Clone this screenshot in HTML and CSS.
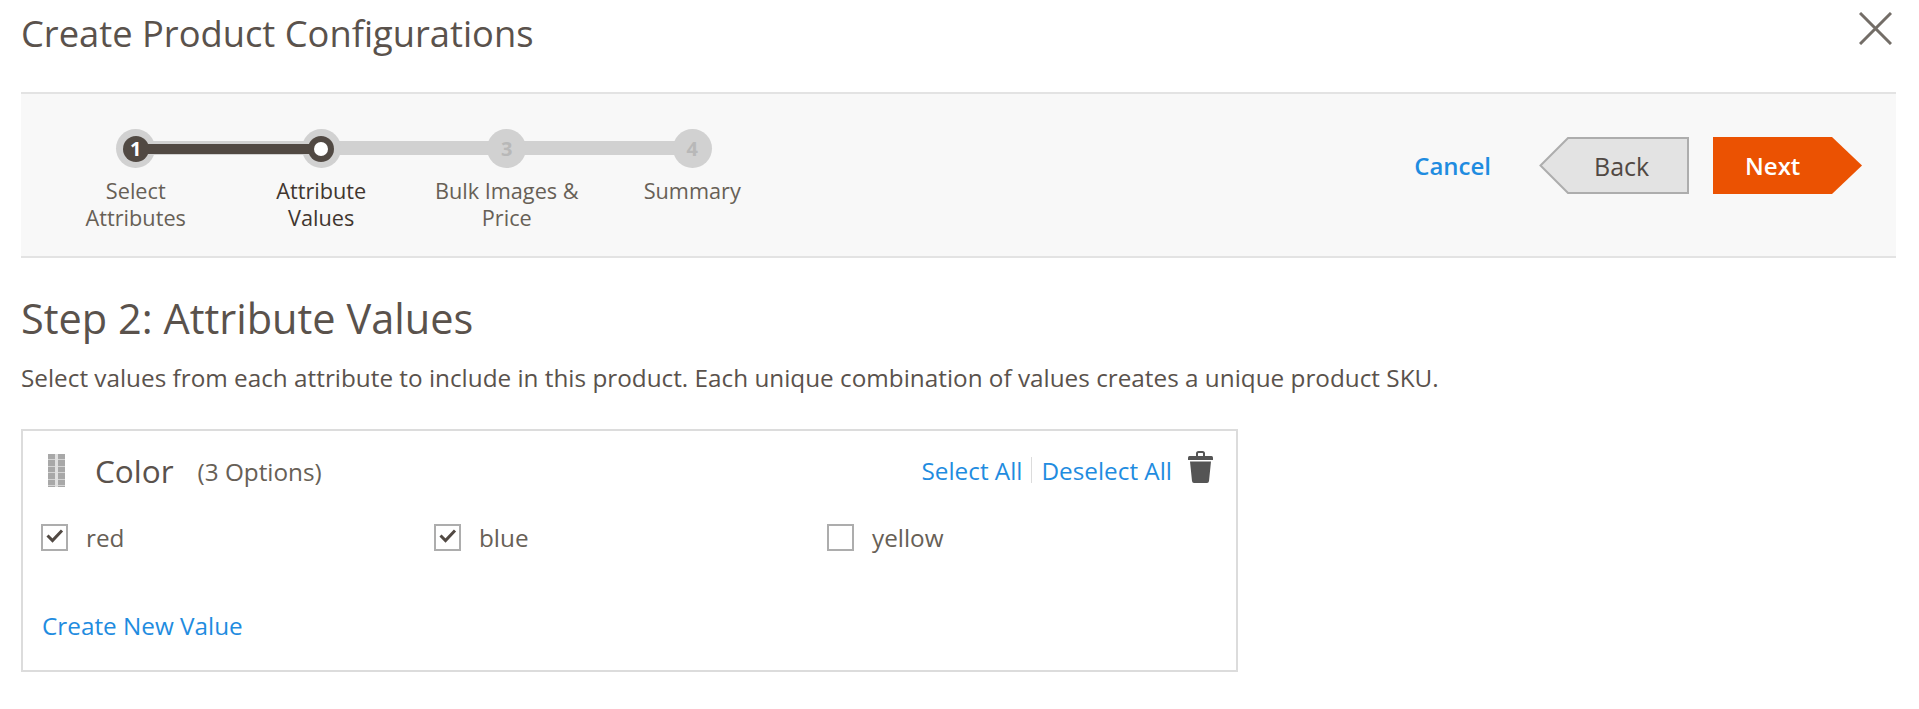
FILE: index.html
```html
<!doctype html>
<html lang="en">
<head>
    <meta charset="UTF-8">
    <title>Create Product Configurations</title>
    <link rel="stylesheet" href="styles.css">
</head>
<body>
<header class="modal_header">
    <h1 class="modal_title">Create Product Configurations</h1>
    <button class="modal_close" aria-label="Close">
        <svg width="33" height="33" viewBox="0 0 33 33"><path d="M1 1 32 32M32 1 1 32" fill="none" stroke="#736d67" stroke-width="3"/></svg>
    </button>
</header>

<section class="wizard">
    <ol class="steps">
        <li class="step step_done">
            <span class="step_dot"><span class="step_num">1</span></span>
            <span class="step_label">Select Attributes</span>
        </li>
        <li class="step step_active">
            <span class="step_dot"><span class="step_num"></span></span>
            <span class="step_label">Attribute Values</span>
        </li>
        <li class="step">
            <span class="step_dot"><span class="step_num">3</span></span>
            <span class="step_label">Bulk Images &amp; Price</span>
        </li>
        <li class="step">
            <span class="step_dot"><span class="step_num">4</span></span>
            <span class="step_label">Summary</span>
        </li>
    </ol>
    <div class="actions">
        <a class="link cancel" href="#">Cancel</a>
        <button class="arrow_btn back">
            <svg width="150" height="57" viewBox="0 0 150 57"><path d="M29 1H149V56H29L1.500 28.500Z" fill="#e3e3e3" stroke="#adadad" stroke-width="2"/></svg>
            <span>Back</span>
        </button>
        <button class="arrow_btn next">
            <svg width="149" height="57" viewBox="0 0 149 57"><path d="M0 0H119L149 28.500 119 57H0Z" fill="#eb5202"/></svg>
            <span>Next</span>
        </button>
    </div>
</section>

<main class="step_body">
    <h2 class="step_title">Step 2: Attribute Values</h2>
    <p class="step_desc">Select values from each attribute to include in this product. Each unique combination of values creates a unique product SKU.</p>

    <div class="attr_box">
        <div class="attr_head">
            <span class="drag"></span>
            <span class="attr_name">Color</span>
            <span class="attr_count">(3 Options)</span>
            <div class="attr_tools">
                <a class="link" href="#">Select All</a>
                <span class="sep"></span>
                <a class="link" href="#">Deselect All</a>
                <svg class="trash" width="25" height="32" viewBox="0 0 25 32">
                    <path d="M9 5V2.500Q9 1 10.500 1H14.500Q16 1 16 2.500V5" fill="none" stroke="#555" stroke-width="2"/>
                    <path d="M1.500 5H23.500Q25 5 25 6.500V9H0V6.500Q0 5 1.500 5Z" fill="#555"/>
                    <path d="M2 10.500H23L21 30Q20.800 32 19 32H6Q4.200 32 4 30Z" fill="#555"/>
                </svg>
            </div>
        </div>
        <div class="options">
            <label class="option">
                <span class="check">
                    <svg width="23" height="23" viewBox="0 0 23 23"><path d="M4.500 9.500 9.500 14.500 19 4.500" fill="none" stroke="#514943" stroke-width="3"/></svg>
                </span>
                red
            </label>
            <label class="option">
                <span class="check">
                    <svg width="23" height="23" viewBox="0 0 23 23"><path d="M4.500 9.500 9.500 14.500 19 4.500" fill="none" stroke="#514943" stroke-width="3"/></svg>
                </span>
                blue
            </label>
            <label class="option">
                <span class="check"></span>
                yellow
            </label>
        </div>
        <a class="link new_value" href="#">Create New Value</a>
    </div>
</main>
</body>
</html>
```

FILE: styles.css
```css
* {
    box-sizing: border-box;
}

body {
    margin: 0;
    padding: 0 23px 0 21px;
    background: #fff;
    color: #514943;
    font-family: "Open Sans", "Noto Sans", sans-serif;
}

h1, h2, p, ol {
    margin: 0;
    padding: 0;
}

button {
    padding: 0;
    border: 0;
    background: none;
    font: inherit;
}

.link {
    color: #1f8ce0;
    text-decoration: none;
}

/* header */
.modal_header {
    display: flex;
    justify-content: space-between;
    align-items: flex-start;
    height: 92px;
}

.modal_title {
    margin-top: 8px;
    font-size: 36.300px;
    line-height: 50px;
    font-weight: 400;
    color: #5a524c;
}

.modal_close {
    display: flex;
    margin-top: 12px;
    margin-right: 4px;
}

/* wizard bar */
.wizard {
    display: flex;
    align-items: flex-start;
    height: 166px;
    padding: 35px 34px 0 22px;
    background: #f8f8f8;
    border-top: 2px solid #e3e3e3;
    border-bottom: 2px solid #e3e3e3;
}

.steps {
    display: flex;
    list-style: none;
}

.step {
    position: relative;
    display: flex;
    flex-direction: column;
    align-items: center;
    width: 185.500px;
}

.step:not(:last-child)::before {
    content: "";
    position: absolute;
    left: 50%;
    top: 12px;
    width: 100%;
    height: 14px;
    background: #d1d1d1;
}

.step_done::after {
    content: "";
    position: absolute;
    left: 50%;
    top: 15px;
    width: 100%;
    height: 10px;
    background: #514943;
    z-index: 2;
}

.step_dot {
    position: relative;
    display: flex;
    justify-content: center;
    align-items: center;
    width: 39px;
    height: 39px;
    border-radius: 50%;
    background: #d1d1d1;
}

.step_num {
    position: relative;
    z-index: 3;
    font-size: 20px;
    font-weight: 700;
    color: #b8b8b8;
}

.step_done .step_num,
.step_active .step_num {
    display: flex;
    justify-content: center;
    align-items: center;
    width: 26px;
    height: 26px;
    border-radius: 50%;
    background: #514943;
    color: #fff;
}

.step_active .step_num::before {
    content: "";
    width: 14px;
    height: 14px;
    border-radius: 50%;
    background: #fff;
}

.step_label {
    width: 150px;
    margin-top: 9px;
    font-size: 21.700px;
    line-height: 27px;
    text-align: center;
    color: #676056;
}

.step_active .step_label {
    color: #41362f;
}

.actions {
    display: flex;
    align-items: center;
    margin-left: auto;
    margin-top: 8px;
    font-size: 24px;
}

.cancel {
    margin-right: 48px;
    font-weight: 600;
}

.arrow_btn {
    position: relative;
    display: flex;
    width: 150px;
    height: 57px;
    align-items: center;
    font-size: 24px;
}

.arrow_btn svg {
    position: absolute;
    left: 0;
    top: 0;
}

.arrow_btn span {
    position: relative;
}

.back {
    color: #514943;
    padding-left: 55px;
    margin-right: 24px;
    font-size: 25px;
}

.next {
    width: 149px;
    color: #fff;
    font-weight: 600;
    padding-left: 32px;
}

/* step content */
.step_title {
    margin-top: 32px;
    font-size: 41.500px;
    line-height: 56px;
    font-weight: 400;
    color: #5a524c;
}

.step_desc {
    margin-top: 17px;
    font-size: 24.300px;
    line-height: 30px;
    color: #5a524c;
}

.attr_box {
    width: 1217px;
    height: 243px;
    margin-top: 36px;
    padding: 20px 23px 0 18px;
    border: 2px solid #dcdcdc;
}

.attr_head {
    display: flex;
    align-items: center;
    height: 38px;
}

.drag {
    width: 17px;
    height: 33px;
    margin-left: 7px;
    background-color: #a8a8a8;
    background-image:
        linear-gradient(#e0e0e0 0 0),
        repeating-linear-gradient(transparent 0 5.500px, #d4d4d4 5.500px 6.500px);
    background-size: 3px 100%, 100% 100%;
    background-position: center, 0 0;
    background-repeat: no-repeat;
}

.attr_name {
    margin-left: 30px;
    font-size: 31.500px;
    font-weight: 400;
    color: #5a524c;
}

.attr_count {
    margin-left: 24px;
    margin-top: 3px;
    font-size: 24.300px;
    color: #676056;
}

.attr_tools {
    display: flex;
    align-items: center;
    margin-left: auto;
    font-size: 24.300px;
}

.sep {
    width: 1px;
    height: 26px;
    margin: 0 9px;
    background: #dcdcdc;
}

.trash {
    margin-left: 16px;
    margin-top: -6px;
}

.options {
    display: flex;
    margin-top: 32px;
}

.option {
    display: flex;
    flex: 0 0 393px;
    align-items: center;
    font-size: 24.300px;
    color: #676056;
}

.check {
    display: flex;
    width: 27px;
    height: 27px;
    margin-right: 18px;
    border: 2px solid #adadad;
    background: #fff;
}

.new_value {
    display: block;
    margin-top: 57px;
    margin-left: 1px;
    font-size: 24.300px;
    line-height: 30px;
}
```
